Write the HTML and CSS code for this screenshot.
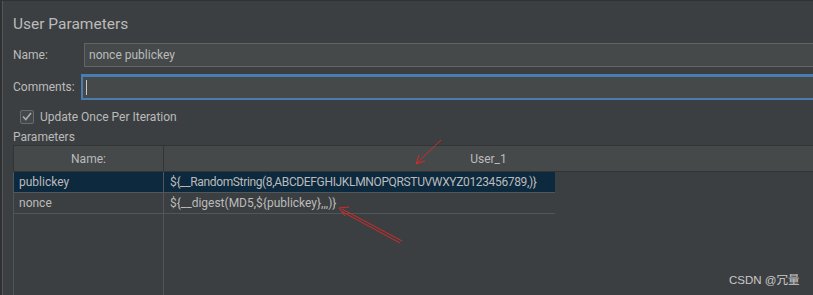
FILE: index.html
```html
<!DOCTYPE html>
<html>
<head>
<meta charset="utf-8">
<link rel="stylesheet" href="styles.css">
</head>
<body>
<div class="frame">
  <div class="title">User Parameters</div>
  <div class="field name-field">
    <label class="lbl">Name:</label>
    <div class="input">nonce publickey</div>
  </div>
  <div class="field comments-field">
    <label class="lbl">Comments:</label>
    <div class="input focused"><span class="caret"></span></div>
  </div>
  <div class="check-row">
    <span class="checkbox"><svg width="10" height="9" viewBox="0 0 10 9"><path d="M1 4.5 L3.8 7.5 L9 1" fill="none" stroke="#a9acae" stroke-width="1.6"/></svg></span>
    <span>Update Once Per Iteration</span>
  </div>
  <div class="section">Parameters</div>
  <div class="table">
    <div class="thead">
      <div class="th c1">Name:</div>
      <div class="th c2">User_1</div>
    </div>
    <div class="tbody">
      <div class="tr selected">
        <div class="td c1">publickey</div>
        <div class="td c2 tight">${__RandomString(8,ABCDEFGHIJKLMNOPQRSTUVWXYZ0123456789,)}</div>
      </div>
      <div class="tr">
        <div class="td c1">nonce</div>
        <div class="td c2">${__digest(MD5,${publickey},,,)}</div>
      </div>
      <div class="filler">
        <div class="c1"></div>
        <div class="c2"></div>
      </div>
    </div>
  </div>
</div>
<svg class="arrows" width="813" height="295" viewBox="0 0 813 295">
  <g stroke="#d42a2a" stroke-width="1" fill="none">
    <line x1="441" y1="140" x2="417" y2="163"/>
    <path d="M416 164 L419 155 M416 164 L425 161"/>
    <line x1="402" y1="241" x2="342" y2="209"/>
    <line x1="400" y1="243" x2="341" y2="211"/>
    <path d="M339 208 L349 207 M339 208 L345 216"/>
  </g>
</svg>
<div class="watermark">CSDN @冗量</div>
</body>
</html>
```
FILE: styles.css
```css
html, body {
  margin: 0;
  padding: 0;
}
body {
  width: 813px;
  height: 295px;
  overflow: hidden;
  background: #2f3133;
  position: relative;
  font-family: "Roboto", "Noto Sans", "Noto Sans CJK SC", sans-serif;
  font-size: 12px;
  color: #bbbbbb;
}
.frame {
  margin-left: 2px;
  margin-top: 1px;
  height: 294px;
  background: #3c3f41;
  border-left: 1px solid #54585a;
  box-sizing: border-box;
  padding-left: 10px;
  display: flex;
  flex-direction: column;
}
.title {
  font-size: 15.5px;
  margin-top: 11px;
  height: 25px;
  line-height: 25px;
  color: #bbbbbb;
}
.field {
  display: flex;
  align-items: center;
}
.name-field {
  margin-top: 6px;
  height: 24px;
}
.comments-field {
  margin-top: 7px;
  height: 26px;
}
.lbl {
  flex: none;
}
.name-field .lbl { width: 71px; }
.comments-field .lbl { width: 68px; }
.input {
  flex: 1;
  height: 24px;
  box-sizing: border-box;
  background: #45494a;
  border: 1px solid #646464;
  border-right: none;
  padding-left: 4px;
  line-height: 22px;
  display: flex;
  align-items: center;
}
.input.focused {
  height: 26px;
  border: none;
  border-top: 3px solid #4a7cb1;
  border-bottom: 2px solid #4a7cb1;
  border-left: 2px solid #4a7cb1;
  background: #45494a;
  padding-left: 3px;
}
.caret {
  width: 1px;
  height: 15px;
  background: #c8c8c8;
}
.check-row {
  display: flex;
  align-items: center;
  margin-top: 9px;
  padding-left: 7px;
  height: 15px;
  gap: 6px;
}
.checkbox {
  width: 12px;
  height: 12px;
  border: 1px solid #6b6b6b;
  border-radius: 2px;
  background: #43494a;
  display: flex;
  align-items: center;
  justify-content: center;
}
.section {
  margin-top: 6px;
  height: 15px;
  line-height: 15px;
}
.table {
  flex: 1;
  display: flex;
  flex-direction: column;
}
.thead {
  display: flex;
  height: 25px;
  background: #45494a;
  border-top: 1px solid #323436;
  border-bottom: 1px solid #323436;
  border-left: 1px solid #323436;
}
.th {
  display: flex;
  align-items: center;
  justify-content: center;
  color: #bbbbbb;
}
.th.c1 {
  flex: none;
  width: 149px;
  border-right: 1px solid #323436;
}
.th.c2 {
  flex: 1;
}
.tbody {
  flex: 1;
  display: flex;
  flex-direction: column;
  border-left: 1px solid #515658;
}
.tr {
  display: flex;
  width: 541px;
  height: 20px;
  border-bottom: 1px solid #515658;
}
.tr.selected {
  background: #0d293e;
}
.td {
  display: flex;
  align-items: center;
  padding-left: 5px;
  white-space: nowrap;
}
.td.c1 {
  flex: none;
  width: 144px;
  border-right: 1px solid #515658;
}
.td.c2 {
  flex: 1;
  min-width: 0;
  padding-left: 6px;
}
.td.tight {
  letter-spacing: -0.35px;
}
.filler {
  flex: 1;
  display: flex;
}
.filler .c1 {
  flex: none;
  width: 149px;
  border-right: 1px solid #515658;
}
.arrows {
  position: absolute;
  left: 0;
  top: 0;
  pointer-events: none;
}
.watermark {
  position: absolute;
  left: 729px;
  top: 271px;
  font-family: "Liberation Sans", "Noto Sans CJK SC", sans-serif;
  font-size: 11.5px;
  color: #c9c9c9;
}
```
